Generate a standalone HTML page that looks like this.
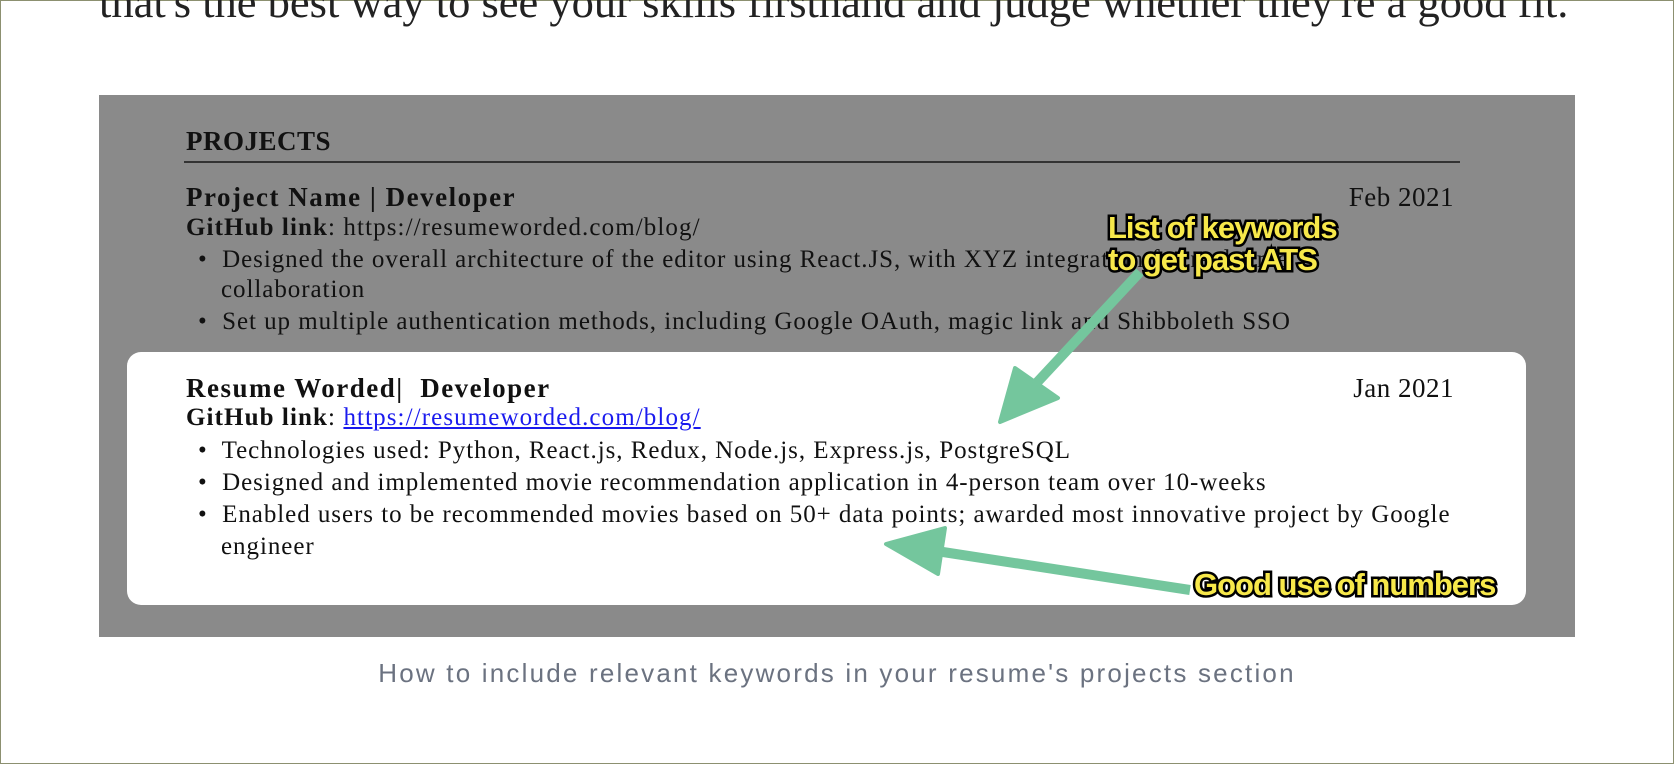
<!DOCTYPE html>
<html><head><meta charset="utf-8"><style>
html,body{margin:0;padding:0}
body{width:1674px;height:764px;position:relative;overflow:hidden;background:#fff;font-family:"Liberation Serif",serif;}
.frame{position:absolute;left:0;top:0;width:1672px;height:762px;border:1px solid #8c9070;box-sizing:content-box}
.abs{position:absolute;white-space:nowrap;color:#111}
.top{left:99px;top:-24px;font-size:44.5px;color:#222}
.grey{position:absolute;left:99px;top:95px;width:1476px;height:542px;background:#8a8a8a}
.white{position:absolute;left:127px;top:352px;width:1399px;height:253px;background:#fff;border-radius:14px}
.t{font-size:25px;line-height:30px;letter-spacing:0.95px}
.h{font-size:27px;letter-spacing:1.5px}
b{font-weight:bold}
.lbl{position:absolute;font-family:"Liberation Sans",sans-serif;font-weight:bold;font-size:31px;letter-spacing:-1px;color:#f7e84a;-webkit-text-stroke:5px #000;paint-order:stroke fill;white-space:nowrap;line-height:32px}
.cap{left:0;width:1674px;text-align:center;top:658px;font-family:"Liberation Sans",sans-serif;font-size:26px;color:#6b7280;letter-spacing:2.2px}
a{color:#1a1aee;text-decoration:underline}
</style></head><body>
<div class="frame"></div>
<div class="abs top">that's the best way to see your skills firsthand and judge whether they're a good fit.</div>
<div class="grey"></div>
<div class="abs" style="left:186px;top:126px;font-size:27px;font-weight:bold;letter-spacing:0.5px">PROJECTS</div>
<div style="position:absolute;left:184px;top:161px;width:1276px;height:2px;background:#333"></div>
<div class="abs t h" style="left:186px;top:182px"><b>Project Name | Developer</b></div>
<div class="abs t h" style="right:220px;top:182px;letter-spacing:0.5px">Feb 2021</div>
<div class="abs t" style="left:186px;top:213px;letter-spacing:1.1px"><b>GitHub link</b>: https://resumeworded.com/blog/</div>
<div class="abs t" style="left:198px;top:245px">•&nbsp; Designed the overall architecture of the editor using React.JS, with XYZ integration for real-time</div>
<div class="abs t" style="left:221px;top:275px">collaboration</div>
<div class="abs t" style="left:198px;top:307px">•&nbsp; Set up multiple authentication methods, including Google OAuth, magic link and Shibboleth SSO</div>
<div class="white"></div>
<div class="abs t h" style="left:186px;top:373px"><b>Resume Worded| &nbsp;Developer</b></div>
<div class="abs t h" style="right:220px;top:373px;letter-spacing:0.5px">Jan 2021</div>
<div class="abs t" style="left:186px;top:403px;letter-spacing:1.1px"><b>GitHub link</b>: <a>https://resumeworded.com/blog/</a></div>
<div class="abs t" style="left:198px;top:436px">•&nbsp; Technologies used: Python, React.js, Redux, Node.js, Express.js, PostgreSQL</div>
<div class="abs t" style="left:198px;top:468px">•&nbsp; Designed and implemented movie recommendation application in 4-person team over 10-weeks</div>
<div class="abs t" style="left:198px;top:500px">•&nbsp; Enabled users to be recommended movies based on 50+ data points; awarded most innovative project by Google</div>
<div class="abs t" style="left:221px;top:532px">engineer</div>
<svg style="position:absolute;left:0;top:0" width="1674" height="764">
<g fill="#74c69d" stroke="#74c69d" stroke-linejoin="round">
<line x1="1140" y1="272" x2="1030" y2="390" stroke-width="10"/>
<polygon points="1000,422 1015,368 1058,398" stroke-width="4"/>
<line x1="1190" y1="590" x2="930" y2="550" stroke-width="10"/>
<polygon points="886,544 945,528 938,574" stroke-width="4"/>
</g>
</svg>
<div class="lbl" style="left:1108px;top:212px">List of keywords<br>to get past ATS</div>
<div class="lbl" style="left:1194px;top:569px">Good use of numbers</div>
<div class="abs cap">How to include relevant keywords in your resume's projects section</div>
</body></html>
